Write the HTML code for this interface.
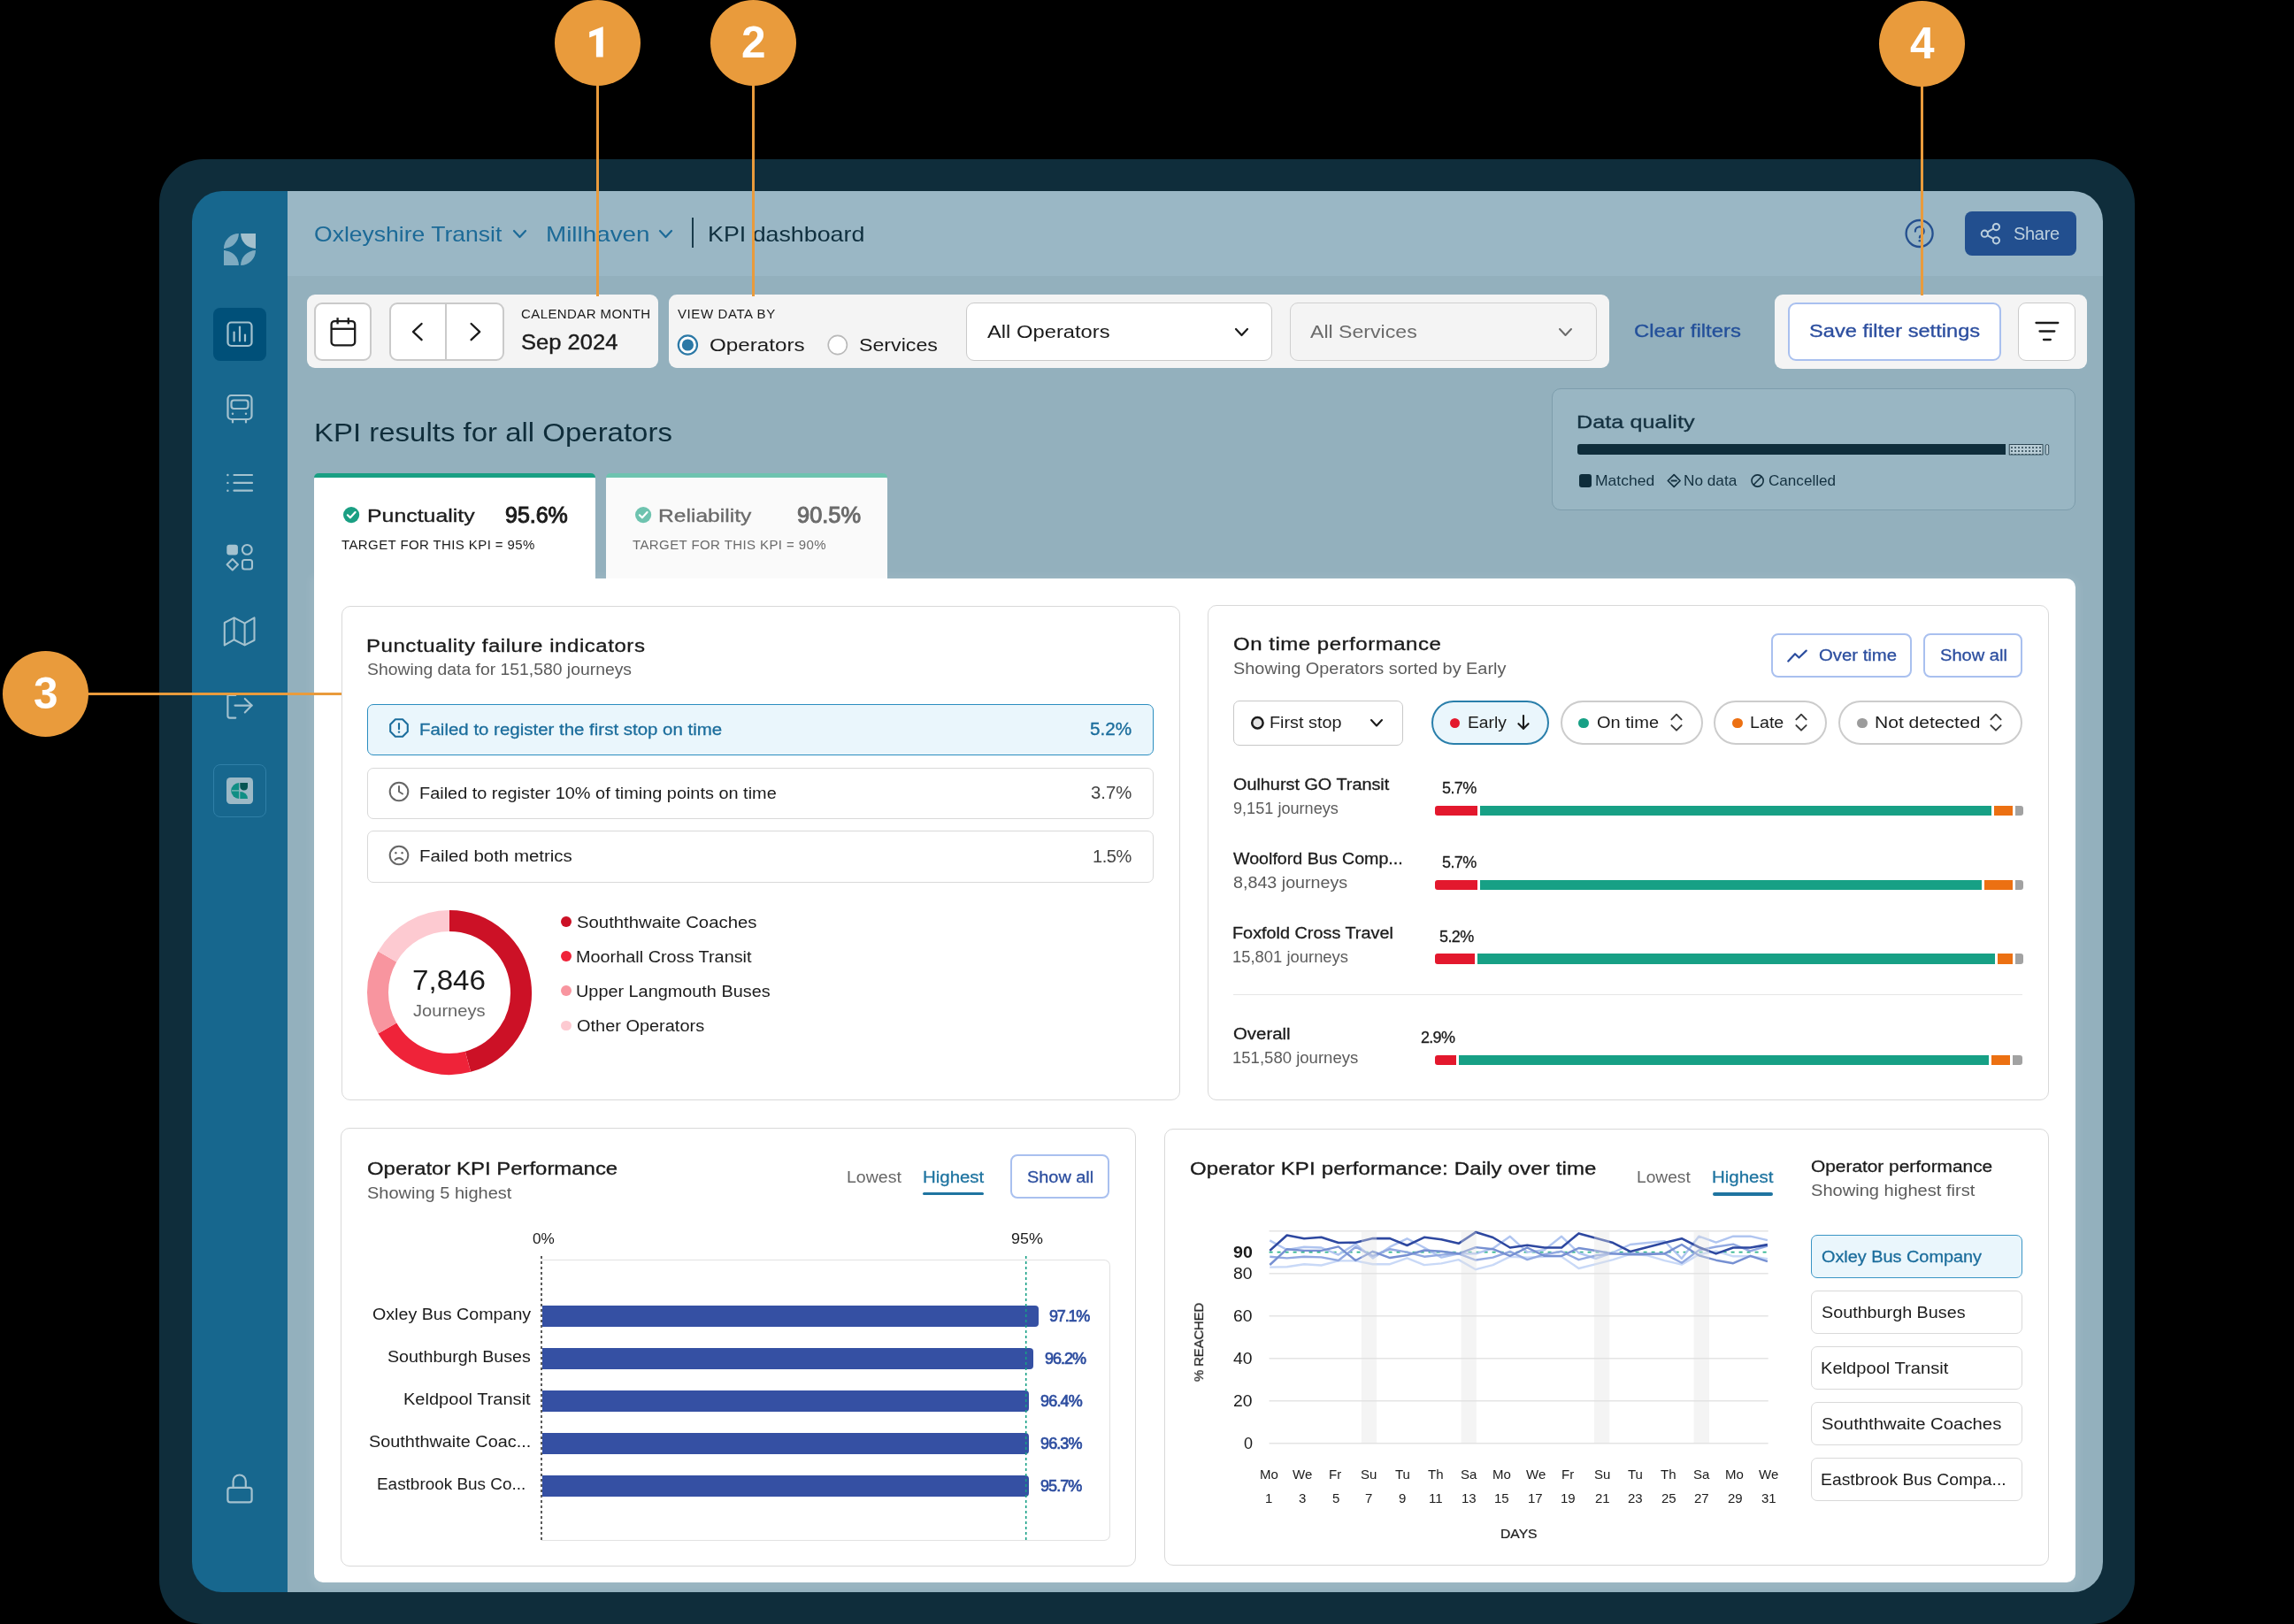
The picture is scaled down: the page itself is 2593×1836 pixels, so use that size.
<!DOCTYPE html>
<html><head><meta charset="utf-8"><title>KPI dashboard</title>
<style>
html,body{margin:0;padding:0;background:#000;width:2593px;height:1836px;overflow:hidden;}
body{position:relative;font-family:"Liberation Sans", sans-serif;}
.t{position:absolute;white-space:nowrap;will-change:transform;}
div,svg{position:absolute;}
</style></head><body>
<div style="position:absolute;left:180.00px;top:180.00px;width:2233.00px;height:1656.00px;box-sizing:border-box;background:#0f2d3b;border-radius:50px;"></div>
<div style="position:absolute;left:217.00px;top:216.00px;width:108.00px;height:1584.00px;box-sizing:border-box;background:#17678e;border-radius:34px 0 0 34px;"></div>
<div style="position:absolute;left:325.00px;top:216.00px;width:2052.00px;height:96.00px;box-sizing:border-box;background:#9ab7c5;border-radius:0 34px 0 0;"></div>
<div style="position:absolute;left:325.00px;top:312.00px;width:2052.00px;height:1488.00px;box-sizing:border-box;background:#93b0bd;border-radius:0 0 34px 0;"></div>
<svg style="position:absolute;left:253.00px;top:264.00px;overflow:visible;" width="36.00" height="36.00" viewBox="253.00 264.00 36.00 36.00">
<path fill="#7eabc1" d="M253 280.9 A16.9 16.9 0 0 1 269.9 264 A16.9 16.9 0 0 1 253 280.9Z"/>
<path fill="#a3c0cd" d="M272.1 264 L289 264 L289 280.9 A16.9 16.9 0 0 1 272.1 264Z"/>
<path fill="#7eabc1" d="M253 283.1 A16.9 16.9 0 0 1 269.9 300 L253 300Z"/>
<path fill="#7eabc1" d="M272.1 300 A16.9 16.9 0 0 1 289 283.1 A16.9 16.9 0 0 1 272.1 300Z"/>
</svg>
<div style="position:absolute;left:241.00px;top:348.00px;width:60.00px;height:60.00px;box-sizing:border-box;background:#005079;border-radius:8px;"></div>
<svg style="position:absolute;left:250.00px;top:357.00px;overflow:visible;" width="42.00" height="42.00" viewBox="250.00 357.00 42.00 42.00"><g fill="none" stroke="#a4c2cf" stroke-width="2.2" stroke-linecap="round">
<rect x="257.5" y="364.5" width="27" height="26.5" rx="4"/>
<line x1="264.6" y1="375.5" x2="264.6" y2="385.5"/><line x1="271" y1="369.5" x2="271" y2="385.5"/><line x1="277" y1="378.5" x2="277" y2="385.5"/></g></svg>
<svg style="position:absolute;left:250.00px;top:440.00px;overflow:visible;" width="42.00" height="42.00" viewBox="250.00 440.00 42.00 42.00"><g fill="none" stroke="#a4c2cf" stroke-width="2.2" stroke-linecap="round">
<rect x="257.5" y="447" width="27" height="27" rx="4"/>
<rect x="261.5" y="452.5" width="19" height="9.5" rx="3"/>
<line x1="263" y1="474" x2="263" y2="477.5"/><line x1="278" y1="474" x2="278" y2="477.5"/></g>
<circle cx="263" cy="467.7" r="1.2" fill="#a4c2cf"/><circle cx="278" cy="467.7" r="1.2" fill="#a4c2cf"/></svg>
<svg style="position:absolute;left:250.00px;top:530.00px;overflow:visible;" width="42.00" height="30.00" viewBox="250.00 530.00 42.00 30.00"><g fill="none" stroke="#a4c2cf" stroke-width="2.2" stroke-linecap="round">
<line x1="264.5" y1="537" x2="285" y2="537"/><line x1="264.5" y1="545.9" x2="285" y2="545.9"/><line x1="264.5" y1="554.7" x2="285" y2="554.7"/></g>
<circle cx="257.4" cy="537" r="1.2" fill="#a4c2cf"/><circle cx="257.4" cy="545.9" r="1.2" fill="#a4c2cf"/><circle cx="257.4" cy="554.7" r="1.2" fill="#a4c2cf"/></svg>
<svg style="position:absolute;left:250.00px;top:610.00px;overflow:visible;" width="42.00" height="40.00" viewBox="250.00 610.00 42.00 40.00"><rect x="256.3" y="615.7" width="12.6" height="11.8" rx="3" fill="#a4c2cf"/>
<g fill="none" stroke="#a4c2cf" stroke-width="2.1"><circle cx="279.3" cy="621.4" r="5.4"/>
<path d="M262.8 632 L269 638.2 L262.8 644.4 L256.6 638.2Z" stroke-linejoin="round"/>
<rect x="274" y="633" width="11" height="10.5" rx="2.5"/></g></svg>
<svg style="position:absolute;left:250.00px;top:694.00px;overflow:visible;" width="42.00" height="40.00" viewBox="250.00 694.00 42.00 40.00"><g fill="none" stroke="#a4c2cf" stroke-width="2.1" stroke-linejoin="round">
<path d="M253.8 704 L264.6 698.4 L276.6 704.6 L287.5 698.4 L287.5 723.8 L276.6 729.4 L264.6 723.2 L253.8 729.4Z"/>
<line x1="264.6" y1="698.4" x2="264.6" y2="723.2"/><line x1="276.6" y1="704.6" x2="276.6" y2="729.4"/></g></svg>
<svg style="position:absolute;left:250.00px;top:780.00px;overflow:visible;" width="42.00" height="40.00" viewBox="250.00 780.00 42.00 40.00"><g fill="none" stroke="#a4c2cf" stroke-width="2.1" stroke-linecap="round" stroke-linejoin="round">
<path d="M266.3 786 L257.4 786 L257.4 809.2 Q257.4 811.6 259.8 811.6 L266.3 811.6"/>
<line x1="265.5" y1="797.6" x2="284.6" y2="797.6"/><path d="M276.8 789.9 L284.6 797.6 L276.8 805.4"/></g></svg>
<div style="position:absolute;left:241.00px;top:864.00px;width:60.00px;height:60.00px;box-sizing:border-box;border:1.5px solid #2f7fa7;border-radius:8px;"></div>
<svg style="position:absolute;left:255.00px;top:878.00px;overflow:visible;" width="32.00" height="32.00" viewBox="255.00 878.00 32.00 32.00"><rect x="256" y="879" width="30" height="30" rx="4.5" fill="#9cb9c6"/>
<path d="M270.2 885 A9 9 0 0 0 270.2 903Z" fill="#0f8e84"/>
<rect x="262" y="893.1" width="8.2" height="1.5" fill="#6fb3b3"/>
<path d="M271.3 885 L280 885 L280 889.5 A4.3 4.3 0 0 1 275.6 893.6 A4.3 4.3 0 0 1 271.3 889.3Z" fill="#045553"/>
<path d="M271.3 895 A8.7 8 0 0 1 280 903 L271.3 903Z" fill="#0f8e84"/></svg>
<svg style="position:absolute;left:250.00px;top:1660.00px;overflow:visible;" width="42.00" height="44.00" viewBox="250.00 1660.00 42.00 44.00"><g fill="none" stroke="#a4c2cf" stroke-width="2.2">
<rect x="257.4" y="1681.8" width="27.2" height="16.6" rx="3"/>
<path d="M263.6 1681.8 L263.6 1674.6 A7.1 7.1 0 0 1 277.8 1674.6 L277.8 1681.8"/></g></svg>
<div class="t" style="left:354.59px;top:253.08px;font-size:24px;line-height:24px;color:#1c6a97;transform:scaleX(1.1052);transform-origin:0 0;">Oxleyshire Transit</div>
<svg style="position:absolute;left:578.50px;top:258.80px;overflow:visible;" width="17.00" height="11.00" viewBox="578.50 258.80 17.00 11.00"><path d="M580.5 260.8 L587 267.8 L593.5 260.8" fill="none" stroke="#1c6a97" stroke-width="2.2" stroke-linecap="round" stroke-linejoin="round"/></svg>
<div class="t" style="left:616.54px;top:253.08px;font-size:24px;line-height:24px;color:#1c6a97;transform:scaleX(1.1592);transform-origin:0 0;">Millhaven</div>
<svg style="position:absolute;left:743.50px;top:258.80px;overflow:visible;" width="17.00" height="11.00" viewBox="743.50 258.80 17.00 11.00"><path d="M745.5 260.8 L752 267.8 L758.5 260.8" fill="none" stroke="#1c6a97" stroke-width="2.2" stroke-linecap="round" stroke-linejoin="round"/></svg>
<div style="position:absolute;left:781.70px;top:246.00px;width:2.00px;height:34.00px;box-sizing:border-box;background:#1a3b4b;"></div>
<div class="t" style="left:799.68px;top:253.08px;font-size:24px;line-height:24px;color:#0f2f3e;transform:scaleX(1.1168);transform-origin:0 0;">KPI dashboard</div>
<svg style="position:absolute;left:2150.00px;top:244.00px;overflow:visible;" width="40.00" height="40.00" viewBox="2150.00 244.00 40.00 40.00"><circle cx="2169.6" cy="264" r="15" fill="none" stroke="#25508f" stroke-width="2.3"/>
<path d="M2164.9 261.6 A4.9 4.9 0 1 1 2171.6 265.9 Q2169.8 266.9 2169.8 268.6" fill="none" stroke="#25508f" stroke-width="2.2" stroke-linecap="round"/>
<circle cx="2169.8" cy="272.2" r="1.3" fill="#25508f"/></svg>
<div style="position:absolute;left:2221.00px;top:238.50px;width:126.00px;height:50.50px;box-sizing:border-box;background:#224f8f;border-radius:8px;"></div>
<svg style="position:absolute;left:2236.00px;top:250.00px;overflow:visible;" width="30.00" height="30.00" viewBox="2236.00 250.00 30.00 30.00"><g fill="none" stroke="#bdd0de" stroke-width="2"><circle cx="2243.3" cy="264.2" r="3.6"/><circle cx="2256.4" cy="256.6" r="3.6"/><circle cx="2256.4" cy="271.8" r="3.6"/>
<line x1="2246.5" y1="262.3" x2="2253.2" y2="258.5"/><line x1="2246.5" y1="266.1" x2="2253.2" y2="269.9"/></g></svg>
<div class="t" style="left:2275.50px;top:253.67px;font-size:20px;line-height:20px;color:#bdd0de;letter-spacing:-0.312px;">Share</div>
<div style="position:absolute;left:347.00px;top:333.00px;width:397.00px;height:83.00px;box-sizing:border-box;background:#f4f4f4;border-radius:9px;"></div>
<div style="position:absolute;left:355.00px;top:341.90px;width:65.00px;height:65.70px;box-sizing:border-box;background:#fff;border:2px solid #cacaca;border-radius:9px;"></div>
<svg style="position:absolute;left:370.00px;top:356.00px;overflow:visible;" width="36.00" height="38.00" viewBox="370.00 356.00 36.00 38.00"><g fill="none" stroke="#1b1b1b" stroke-width="2.3" stroke-linejoin="round">
<rect x="374.6" y="363.1" width="26.6" height="27.2" rx="3.6"/><line x1="374.6" y1="371.8" x2="401.2" y2="371.8"/>
<line x1="381.6" y1="359.2" x2="381.6" y2="366.4"/><line x1="393.8" y1="359.2" x2="393.8" y2="366.4"/></g></svg>
<div style="position:absolute;left:439.50px;top:341.90px;width:130.50px;height:65.70px;box-sizing:border-box;background:#fff;border:2px solid #cacaca;border-radius:9px;"></div>
<div style="position:absolute;left:503.20px;top:342.50px;width:2.00px;height:64.50px;box-sizing:border-box;background:#cacaca;"></div>
<svg style="position:absolute;left:460.00px;top:360.00px;overflow:visible;" width="30.00" height="30.00" viewBox="460.00 360.00 30.00 30.00"><path d="M476.6 366 L467 375.1 L476.6 384.2" fill="none" stroke="#1b1b1b" stroke-width="2.3" stroke-linecap="round" stroke-linejoin="round"/></svg>
<svg style="position:absolute;left:525.00px;top:360.00px;overflow:visible;" width="30.00" height="30.00" viewBox="525.00 360.00 30.00 30.00"><path d="M532.6 366 L542.2 375.1 L532.6 384.2" fill="none" stroke="#1b1b1b" stroke-width="2.3" stroke-linecap="round" stroke-linejoin="round"/></svg>
<div class="t" style="left:589.10px;top:347.20px;font-size:15px;line-height:15px;color:#1b1b1b;letter-spacing:0.407px;">CALENDAR MONTH</div>
<div class="t" style="left:588.94px;top:375.28px;font-size:24px;line-height:24px;color:#1b1b1b;-webkit-text-stroke:0.38px #1b1b1b;transform:scaleX(1.0649);transform-origin:0 0;">Sep 2024</div>
<div style="position:absolute;left:756.00px;top:333.00px;width:1063.00px;height:83.00px;box-sizing:border-box;background:#f4f4f4;border-radius:9px;"></div>
<div class="t" style="left:766.00px;top:347.30px;font-size:15px;line-height:15px;color:#1b1b1b;letter-spacing:0.595px;">VIEW DATA BY</div>
<svg style="position:absolute;left:760.00px;top:372.00px;overflow:visible;" width="36.00" height="36.00" viewBox="760.00 372.00 36.00 36.00"><circle cx="777.4" cy="390" r="10.6" fill="#fff" stroke="#2b78a6" stroke-width="2.2"/><circle cx="777.4" cy="390" r="6.6" fill="#2b78a6"/></svg>
<div class="t" style="left:802.30px;top:379.55px;font-size:20.5px;line-height:20.5px;color:#1b1b1b;transform:scaleX(1.1804);transform-origin:0 0;">Operators</div>
<svg style="position:absolute;left:930.00px;top:372.00px;overflow:visible;" width="36.00" height="36.00" viewBox="930.00 372.00 36.00 36.00"><circle cx="946.8" cy="390" r="10.6" fill="#fff" stroke="#b9b9b9" stroke-width="1.6"/></svg>
<div class="t" style="left:971.40px;top:379.55px;font-size:20.5px;line-height:20.5px;color:#1b1b1b;transform:scaleX(1.1307);transform-origin:0 0;">Services</div>
<div style="position:absolute;left:1092.00px;top:341.90px;width:346.00px;height:65.70px;box-sizing:border-box;background:#fff;border:1.5px solid #cacaca;border-radius:9px;"></div>
<div class="t" style="left:1116.20px;top:365.15px;font-size:20.5px;line-height:20.5px;color:#1b1b1b;transform:scaleX(1.1585);transform-origin:0 0;">All Operators</div>
<svg style="position:absolute;left:1394.50px;top:369.50px;overflow:visible;" width="17.00" height="11.00" viewBox="1394.50 369.50 17.00 11.00"><path d="M1396.5 371.5 L1403 378.5 L1409.5 371.5" fill="none" stroke="#1b1b1b" stroke-width="2.2" stroke-linecap="round" stroke-linejoin="round"/></svg>
<div style="position:absolute;left:1458.00px;top:341.90px;width:347.00px;height:65.70px;box-sizing:border-box;background:#f4f4f4;border:1.5px solid #cfcfcf;border-radius:9px;"></div>
<div class="t" style="left:1481.40px;top:365.15px;font-size:20.5px;line-height:20.5px;color:#6b6b6b;transform:scaleX(1.1270);transform-origin:0 0;">All Services</div>
<svg style="position:absolute;left:1760.50px;top:369.50px;overflow:visible;" width="17.00" height="11.00" viewBox="1760.50 369.50 17.00 11.00"><path d="M1762.5 371.5 L1769 378.5 L1775.5 371.5" fill="none" stroke="#6b6b6b" stroke-width="2.0" stroke-linecap="round" stroke-linejoin="round"/></svg>
<div class="t" style="left:1846.83px;top:363.65px;font-size:20.5px;line-height:20.5px;color:#24509a;-webkit-text-stroke:0.33px #24509a;transform:scaleX(1.1659);transform-origin:0 0;">Clear filters</div>
<div style="position:absolute;left:2006.00px;top:333.00px;width:353.00px;height:83.50px;box-sizing:border-box;background:#f4f4f4;border-radius:9px;"></div>
<div style="position:absolute;left:2020.50px;top:341.90px;width:241.50px;height:65.70px;box-sizing:border-box;background:#fff;border:2px solid #a9c0ef;border-radius:9px;"></div>
<div class="t" style="left:2044.60px;top:363.65px;font-size:20.5px;line-height:20.5px;color:#2c4e9f;-webkit-text-stroke:0.33px #2c4e9f;transform:scaleX(1.1528);transform-origin:0 0;">Save filter settings</div>
<div style="position:absolute;left:2281.30px;top:341.90px;width:64.70px;height:65.70px;box-sizing:border-box;background:#fff;border:1.5px solid #cacaca;border-radius:9px;"></div>
<svg style="position:absolute;left:2295.00px;top:358.00px;overflow:visible;" width="36.00" height="32.00" viewBox="2295.00 358.00 36.00 32.00"><g stroke="#1b1b1b" stroke-width="2.3" stroke-linecap="round">
<line x1="2301.5" y1="365" x2="2326.3" y2="365"/><line x1="2305.5" y1="374.5" x2="2322.3" y2="374.5"/><line x1="2310" y1="384" x2="2317.8" y2="384"/></g></svg>
<div class="t" style="left:354.90px;top:474.21px;font-size:30px;line-height:30px;color:#0f2d3a;transform:scaleX(1.0989);transform-origin:0 0;">KPI results for all Operators</div>
<div style="position:absolute;left:355.00px;top:534.60px;width:317.70px;height:125.40px;box-sizing:border-box;background:#fff;border-radius:7px 7px 0 0;"></div>
<div style="position:absolute;left:355.00px;top:534.60px;width:317.70px;height:5.20px;box-sizing:border-box;background:#1a9f83;border-radius:7px 7px 0 0;"></div>
<div style="position:absolute;left:685.00px;top:534.60px;width:318.00px;height:119.00px;box-sizing:border-box;background:#fafafa;border-radius:7px 7px 0 0;"></div>
<div style="position:absolute;left:685.00px;top:534.60px;width:318.00px;height:5.20px;box-sizing:border-box;background:#6ec3af;border-radius:7px 7px 0 0;"></div>
<svg style="position:absolute;left:386.70px;top:572.00px;overflow:visible;" width="20.20" height="20.20" viewBox="386.70 572.00 20.20 20.20"><circle cx="396.8" cy="582.1" r="9.1" fill="#1a9f83"/><path d="M392.6 582.3000000000001 L395.6 585.3000000000001 L401.3 579.1" fill="none" stroke="#fff" stroke-width="2.2" stroke-linecap="round" stroke-linejoin="round"/></svg>
<div class="t" style="left:414.62px;top:571.72px;font-size:21px;line-height:21px;color:#1b1b1b;-webkit-text-stroke:0.34px #1b1b1b;transform:scaleX(1.1837);transform-origin:0 0;">Punctuality</div>
<div class="t" style="left:571.20px;top:569.94px;font-size:25px;line-height:25px;color:#1b1b1b;letter-spacing:-0.014px;-webkit-text-stroke:1.00px #1b1b1b;">95.6%</div>
<div class="t" style="left:385.50px;top:608.30px;font-size:15px;line-height:15px;color:#1b1b1b;letter-spacing:0.395px;">TARGET FOR THIS KPI = 95%</div>
<svg style="position:absolute;left:716.60px;top:572.00px;overflow:visible;" width="20.20" height="20.20" viewBox="716.60 572.00 20.20 20.20"><circle cx="726.7" cy="582.1" r="9.1" fill="#6ec3af"/><path d="M722.5 582.3000000000001 L725.5 585.3000000000001 L731.2 579.1" fill="none" stroke="#fff" stroke-width="2.2" stroke-linecap="round" stroke-linejoin="round"/></svg>
<div class="t" style="left:744.43px;top:571.72px;font-size:21px;line-height:21px;color:#6b6b6b;-webkit-text-stroke:0.34px #6b6b6b;transform:scaleX(1.1716);transform-origin:0 0;">Reliability</div>
<div class="t" style="left:900.58px;top:569.94px;font-size:25px;line-height:25px;color:#6b6b6b;-webkit-text-stroke:1.00px #6b6b6b;transform:scaleX(1.0164);transform-origin:0 0;">90.5%</div>
<div class="t" style="left:715.40px;top:608.30px;font-size:15px;line-height:15px;color:#6b6b6b;letter-spacing:0.408px;">TARGET FOR THIS KPI = 90%</div>
<div style="position:absolute;left:1753.50px;top:438.60px;width:592.50px;height:138.70px;box-sizing:border-box;background:#99b6c3;border:1.5px solid #7d9dac;border-radius:10px;"></div>
<div class="t" style="left:1781.80px;top:466.42px;font-size:21px;line-height:21px;color:#143140;letter-spacing:0.040px;-webkit-text-stroke:0.34px #143140;transform:scaleX(1.2000);transform-origin:0 0;">Data quality</div>
<div style="position:absolute;left:1783.00px;top:502.40px;width:484.00px;height:11.90px;box-sizing:border-box;background:#0f2d3b;border-radius:3px 0 0 3px;"></div>
<svg style="position:absolute;left:2270.00px;top:501.00px;overflow:visible;" width="50.00" height="15.00" viewBox="2270.00 501.00 50.00 15.00"><defs><pattern id="dots" x="0" y="0" width="4" height="4" patternUnits="userSpaceOnUse"><rect width="4" height="4" fill="#b9cdd6"/><circle cx="2" cy="2" r="0.9" fill="#16303c"/></pattern></defs>
<rect x="2271.2" y="502.6" width="37.8" height="11.4" fill="url(#dots)" stroke="#16303c" stroke-width="0.8"/>
<rect x="2312.2" y="502.6" width="3.5" height="11.4" rx="1.5" fill="#b9cdd6" stroke="#16303c" stroke-width="0.8"/></svg>
<div style="position:absolute;left:1784.60px;top:536.30px;width:14.40px;height:14.40px;box-sizing:border-box;background:#0f2d3b;border-radius:3px;"></div>
<div class="t" style="left:1802.97px;top:535.11px;font-size:17px;line-height:17px;color:#143140;transform:scaleX(1.0306);transform-origin:0 0;">Matched</div>
<svg style="position:absolute;left:1880.00px;top:532.00px;overflow:visible;" width="24.00" height="24.00" viewBox="1880.00 532.00 24.00 24.00"><path d="M1892.2 536.6 L1899.1 543.5 L1892.2 550.4 L1885.3 543.5Z" fill="none" stroke="#143140" stroke-width="1.7" stroke-linejoin="round"/><line x1="1889.6" y1="543.5" x2="1894.8" y2="543.5" stroke="#143140" stroke-width="2.1" stroke-linecap="round"/></svg>
<div class="t" style="left:1902.99px;top:535.11px;font-size:17px;line-height:17px;color:#143140;transform:scaleX(1.0121);transform-origin:0 0;">No data</div>
<svg style="position:absolute;left:1975.00px;top:532.00px;overflow:visible;" width="24.00" height="24.00" viewBox="1975.00 532.00 24.00 24.00"><circle cx="1986.6" cy="543.5" r="6.6" fill="none" stroke="#143140" stroke-width="1.6"/><line x1="1982" y1="548.2" x2="1991.2" y2="538.8" stroke="#143140" stroke-width="1.6"/></svg>
<div class="t" style="left:1999.00px;top:535.11px;font-size:17px;line-height:17px;color:#143140;transform:scaleX(1.0060);transform-origin:0 0;">Cancelled</div>
<div style="position:absolute;left:355.00px;top:653.60px;width:1991.00px;height:1135.90px;box-sizing:border-box;background:#fff;border-radius:0 10px 10px 10px;box-shadow:0 2px 8px 5px rgba(255,255,255,0.075);"></div>
<div style="position:absolute;left:385.50px;top:685.00px;width:948.00px;height:559.00px;box-sizing:border-box;border:1.8px solid #d9d9d9;border-radius:10px;background:#fff;"></div>
<div class="t" style="left:413.90px;top:719.57px;font-size:20px;line-height:20px;color:#1b1b1b;letter-spacing:0.462px;-webkit-text-stroke:0.32px #1b1b1b;transform:scaleX(1.2000);transform-origin:0 0;">Punctuality failure indicators</div>
<div class="t" style="left:415.00px;top:748.26px;font-size:18px;line-height:18px;color:#5b5b5b;transform:scaleX(1.0748);transform-origin:0 0;">Showing data for 151,580 journeys</div>
<div style="position:absolute;left:415.10px;top:795.60px;width:888.80px;height:58.60px;box-sizing:border-box;background:#eaf6fc;border:1.5px solid #2b8ec0;border-radius:7px;"></div>
<div style="position:absolute;left:415.10px;top:867.50px;width:888.80px;height:58.30px;box-sizing:border-box;border:1.5px solid #d9d9d9;border-radius:7px;"></div>
<div style="position:absolute;left:415.10px;top:939.30px;width:888.80px;height:58.40px;box-sizing:border-box;border:1.5px solid #d9d9d9;border-radius:7px;"></div>
<svg style="position:absolute;left:436.80px;top:809.20px;overflow:visible;" width="28.00" height="28.00" viewBox="436.80 809.20 28.00 28.00"><polygon points="460.59,827.26 454.86,832.99 446.74,832.99 441.01,827.26 441.01,819.14 446.74,813.41 454.86,813.41 460.59,819.14" fill="none" stroke="#1b6d9c" stroke-width="2.1" stroke-linejoin="round"/><line x1="450.8" y1="818.2" x2="450.8" y2="824.4000000000001" stroke="#1b6d9c" stroke-width="2.1" stroke-linecap="round"/><circle cx="450.8" cy="827.8000000000001" r="1.2" fill="#1b6d9c"/></svg>
<div class="t" style="left:474.36px;top:815.66px;font-size:18px;line-height:18px;color:#1b6d9c;-webkit-text-stroke:0.29px #1b6d9c;transform:scaleX(1.1362);transform-origin:0 0;">Failed to register the first stop on time</div>
<div class="t" style="left:1232.00px;top:813.97px;font-size:20px;line-height:20px;color:#1b6d9c;-webkit-text-stroke:0.32px #1b6d9c;transform:scaleX(1.0349);transform-origin:0 0;">5.2%</div>
<svg style="position:absolute;left:436.80px;top:881.30px;overflow:visible;" width="28.00" height="28.00" viewBox="436.80 881.30 28.00 28.00"><circle cx="450.8" cy="895.3" r="10.3" fill="none" stroke="#666" stroke-width="2"/><path d="M450.8 889.3 L450.8 895.3 L454.8 897.8" fill="none" stroke="#666" stroke-width="2" stroke-linecap="round" stroke-linejoin="round"/></svg>
<div class="t" style="left:474.39px;top:887.56px;font-size:18px;line-height:18px;color:#1b1b1b;transform:scaleX(1.1055);transform-origin:0 0;">Failed to register 10% of timing points on time</div>
<div class="t" style="left:1232.90px;top:885.87px;font-size:20px;line-height:20px;color:#444;transform:scaleX(1.0152);transform-origin:0 0;">3.7%</div>
<svg style="position:absolute;left:436.80px;top:953.10px;overflow:visible;" width="28.00" height="28.00" viewBox="436.80 953.10 28.00 28.00"><circle cx="450.8" cy="967.1" r="10.3" fill="none" stroke="#666" stroke-width="2"/><circle cx="447.2" cy="964.3000000000001" r="1.2" fill="#666"/><circle cx="454.40000000000003" cy="964.3000000000001" r="1.2" fill="#666"/><path d="M446.3 972.1 Q450.8 968.1 455.3 972.1" fill="none" stroke="#666" stroke-width="1.8" stroke-linecap="round"/></svg>
<div class="t" style="left:474.36px;top:959.36px;font-size:18px;line-height:18px;color:#1b1b1b;transform:scaleX(1.1366);transform-origin:0 0;">Failed both metrics</div>
<div class="t" style="left:1235.00px;top:957.67px;font-size:20px;line-height:20px;color:#444;letter-spacing:-0.468px;">1.5%</div>
<svg style="position:absolute;left:413.00px;top:1026.80px;overflow:visible;" width="190.00" height="190.00" viewBox="413.00 1026.80 190.00 190.00"><path d="M508.00 1040.80 A81 81 0 0 1 528.96 1200.04" fill="none" stroke="#cc1126" stroke-width="24"/><path d="M528.96 1200.04 A81 81 0 0 1 437.85 1162.30" fill="none" stroke="#ef2339" stroke-width="24"/><path d="M437.85 1162.30 A81 81 0 0 1 437.85 1081.30" fill="none" stroke="#f8959f" stroke-width="24"/><path d="M437.85 1081.30 A81 81 0 0 1 508.00 1040.80" fill="none" stroke="#fdcad1" stroke-width="24"/></svg>
<div class="t" style="left:466.33px;top:1093.36px;font-size:31px;line-height:31px;color:#1b1b1b;transform:scaleX(1.0699);transform-origin:0 0;">7,846</div>
<div class="t" style="left:467.40px;top:1132.92px;font-size:19px;line-height:19px;color:#666;transform:scaleX(1.0575);transform-origin:0 0;">Journeys</div>
<div style="position:absolute;left:633.90px;top:1036.30px;width:11.80px;height:11.80px;box-sizing:border-box;background:#cc1126;border-radius:50%;"></div>
<div class="t" style="left:652.20px;top:1033.56px;font-size:18px;line-height:18px;color:#1b1b1b;transform:scaleX(1.1293);transform-origin:0 0;">Souththwaite Coaches</div>
<div style="position:absolute;left:633.90px;top:1075.37px;width:11.80px;height:11.80px;box-sizing:border-box;background:#ef2339;border-radius:50%;"></div>
<div class="t" style="left:651.10px;top:1072.63px;font-size:18px;line-height:18px;color:#1b1b1b;transform:scaleX(1.1027);transform-origin:0 0;">Moorhall Cross Transit</div>
<div style="position:absolute;left:633.90px;top:1114.44px;width:11.80px;height:11.80px;box-sizing:border-box;background:#f8959f;border-radius:50%;"></div>
<div class="t" style="left:651.10px;top:1111.70px;font-size:18px;line-height:18px;color:#1b1b1b;transform:scaleX(1.1028);transform-origin:0 0;">Upper Langmouth Buses</div>
<div style="position:absolute;left:633.90px;top:1153.51px;width:11.80px;height:11.80px;box-sizing:border-box;background:#fdcad1;border-radius:50%;"></div>
<div class="t" style="left:652.20px;top:1150.77px;font-size:18px;line-height:18px;color:#1b1b1b;transform:scaleX(1.1080);transform-origin:0 0;">Other Operators</div>
<div style="position:absolute;left:1365.00px;top:684.20px;width:951.20px;height:559.80px;box-sizing:border-box;border:1.8px solid #d9d9d9;border-radius:10px;background:#fff;"></div>
<div class="t" style="left:1394.40px;top:718.47px;font-size:20px;line-height:20px;color:#1b1b1b;letter-spacing:0.432px;-webkit-text-stroke:0.32px #1b1b1b;transform:scaleX(1.2000);transform-origin:0 0;">On time performance</div>
<div class="t" style="left:1394.40px;top:747.46px;font-size:18px;line-height:18px;color:#5b5b5b;transform:scaleX(1.1049);transform-origin:0 0;">Showing Operators sorted by Early</div>
<div style="position:absolute;left:2002.30px;top:716.10px;width:158.90px;height:49.60px;box-sizing:border-box;border:2px solid #a9c0ef;border-radius:8px;background:#fff;"></div>
<svg style="position:absolute;left:2015.00px;top:728.00px;overflow:visible;" width="32.00" height="26.00" viewBox="2015.00 728.00 32.00 26.00"><path d="M2021.3 747.5 L2029 739.2 L2033.5 743.5 L2041.7 735.6" fill="none" stroke="#2c4e9f" stroke-width="2.2" stroke-linecap="round" stroke-linejoin="round"/></svg>
<div class="t" style="left:2055.70px;top:732.36px;font-size:18px;line-height:18px;color:#2c4e9f;-webkit-text-stroke:0.29px #2c4e9f;transform:scaleX(1.1282);transform-origin:0 0;">Over time</div>
<div style="position:absolute;left:2174.40px;top:716.10px;width:112.00px;height:49.60px;box-sizing:border-box;border:2px solid #a9c0ef;border-radius:8px;background:#fff;"></div>
<div class="t" style="left:2192.80px;top:732.36px;font-size:18px;line-height:18px;color:#2c4e9f;-webkit-text-stroke:0.29px #2c4e9f;transform:scaleX(1.1158);transform-origin:0 0;">Show all</div>
<div style="position:absolute;left:1394.40px;top:792.30px;width:191.40px;height:50.30px;box-sizing:border-box;border:1.6px solid #c8c8c8;border-radius:7px;background:#fff;"></div>
<svg style="position:absolute;left:1410.00px;top:806.00px;overflow:visible;" width="24.00" height="24.00" viewBox="1410.00 806.00 24.00 24.00"><circle cx="1421.4" cy="817.3" r="6.2" fill="#e4e4e4" stroke="#1b1b1b" stroke-width="2.5"/></svg>
<div class="t" style="left:1435.20px;top:808.26px;font-size:18px;line-height:18px;color:#1b1b1b;transform:scaleX(1.1000);transform-origin:0 0;">First stop</div>
<svg style="position:absolute;left:1548.00px;top:812.35px;overflow:visible;" width="16.00" height="10.50" viewBox="1548.00 812.35 16.00 10.50"><path d="M1550.0 814.35 L1556 820.85 L1562.0 814.35" fill="none" stroke="#1b1b1b" stroke-width="2.1" stroke-linecap="round" stroke-linejoin="round"/></svg>
<div style="position:absolute;left:1617.80px;top:792.30px;width:132.90px;height:50.10px;box-sizing:border-box;background:#eaf6fc;border:2px solid #2a7fab;border-radius:25px;"></div>
<div style="position:absolute;left:1638.90px;top:811.80px;width:11.60px;height:11.60px;box-sizing:border-box;background:#e3182d;border-radius:50%;"></div>
<div class="t" style="left:1658.63px;top:808.26px;font-size:18px;line-height:18px;color:#1b1b1b;transform:scaleX(1.0672);transform-origin:0 0;">Early</div>
<svg style="position:absolute;left:1713.50px;top:805.00px;overflow:visible;" width="16.00" height="26.00" viewBox="1713.50 805.00 16.00 26.00"><g fill="none" stroke="#1b1b1b" stroke-width="2.1" stroke-linecap="round" stroke-linejoin="round"><line x1="1721.5" y1="809" x2="1721.5" y2="823.6"/><path d="M1715.9 818.2 L1721.5 823.8 L1727.1 818.2"/></g></svg>
<div style="position:absolute;left:1763.50px;top:792.30px;width:161.00px;height:50.10px;box-sizing:border-box;background:#fff;border:2px solid #cccccc;border-radius:25px;"></div>
<div style="position:absolute;left:1784.20px;top:811.80px;width:11.60px;height:11.60px;box-sizing:border-box;background:#17a085;border-radius:50%;"></div>
<div class="t" style="left:1805.40px;top:808.26px;font-size:18px;line-height:18px;color:#1b1b1b;transform:scaleX(1.1110);transform-origin:0 0;">On time</div>
<svg style="position:absolute;left:1887.00px;top:805.00px;overflow:visible;" width="16.00" height="26.00" viewBox="1887.00 805.00 16.00 26.00"><g fill="none" stroke="#3a3a3a" stroke-width="1.9" stroke-linecap="round" stroke-linejoin="round"><path d="M1889.4 813.4 L1895 807.7 L1900.6 813.4"/><path d="M1889.4 820.1 L1895 825.7 L1900.6 820.1"/></g></svg>
<div style="position:absolute;left:1937.40px;top:792.30px;width:128.10px;height:50.10px;box-sizing:border-box;background:#fff;border:2px solid #cccccc;border-radius:25px;"></div>
<div style="position:absolute;left:1958.00px;top:811.80px;width:11.60px;height:11.60px;box-sizing:border-box;background:#ec7012;border-radius:50%;"></div>
<div class="t" style="left:1978.11px;top:808.26px;font-size:18px;line-height:18px;color:#1b1b1b;transform:scaleX(1.0934);transform-origin:0 0;">Late</div>
<svg style="position:absolute;left:2028.00px;top:805.00px;overflow:visible;" width="16.00" height="26.00" viewBox="2028.00 805.00 16.00 26.00"><g fill="none" stroke="#3a3a3a" stroke-width="1.9" stroke-linecap="round" stroke-linejoin="round"><path d="M2030.4 813.4 L2036 807.7 L2041.6 813.4"/><path d="M2030.4 820.1 L2036 825.7 L2041.6 820.1"/></g></svg>
<div style="position:absolute;left:2078.30px;top:792.30px;width:208.10px;height:50.10px;box-sizing:border-box;background:#fff;border:2px solid #cccccc;border-radius:25px;"></div>
<div style="position:absolute;left:2099.40px;top:811.80px;width:11.60px;height:11.60px;box-sizing:border-box;background:#9b9b9b;border-radius:50%;"></div>
<div class="t" style="left:2119.03px;top:808.26px;font-size:18px;line-height:18px;color:#1b1b1b;transform:scaleX(1.1693);transform-origin:0 0;">Not detected</div>
<svg style="position:absolute;left:2248.00px;top:805.00px;overflow:visible;" width="16.00" height="26.00" viewBox="2248.00 805.00 16.00 26.00"><g fill="none" stroke="#3a3a3a" stroke-width="1.9" stroke-linecap="round" stroke-linejoin="round"><path d="M2250.4 813.4 L2256 807.7 L2261.6 813.4"/><path d="M2250.4 820.1 L2256 825.7 L2261.6 820.1"/></g></svg>
<div class="t" style="left:1394.30px;top:878.36px;font-size:18px;line-height:18px;color:#1b1b1b;-webkit-text-stroke:0.29px #1b1b1b;transform:scaleX(1.1012);transform-origin:0 0;">Oulhurst GO Transit</div>
<div class="t" style="left:1394.30px;top:905.36px;font-size:18px;line-height:18px;color:#5b5b5b;transform:scaleX(1.0069);transform-origin:0 0;">9,151 journeys</div>
<div class="t" style="left:1630.30px;top:882.36px;font-size:18px;line-height:18px;color:#1b1b1b;letter-spacing:-0.574px;-webkit-text-stroke:0.29px #1b1b1b;">5.7%</div>
<div style="position:absolute;left:1621.90px;top:910.60px;width:48.10px;height:11.80px;box-sizing:border-box;background:#e3182d;border-radius:3px 0 0 3px;"></div>
<div style="position:absolute;left:1673.00px;top:910.60px;width:577.90px;height:11.80px;box-sizing:border-box;background:#17a085;border-radius:0;"></div>
<div style="position:absolute;left:2253.80px;top:910.60px;width:21.00px;height:11.80px;box-sizing:border-box;background:#ec7012;border-radius:0;"></div>
<div style="position:absolute;left:2278.00px;top:910.60px;width:8.50px;height:11.80px;box-sizing:border-box;background:#a2a2a2;border-radius:0 3px 3px 0;"></div>
<div class="t" style="left:1394.30px;top:962.06px;font-size:18px;line-height:18px;color:#1b1b1b;-webkit-text-stroke:0.29px #1b1b1b;transform:scaleX(1.0908);transform-origin:0 0;">Woolford Bus Comp...</div>
<div class="t" style="left:1394.30px;top:989.06px;font-size:18px;line-height:18px;color:#5b5b5b;transform:scaleX(1.0942);transform-origin:0 0;">8,843 journeys</div>
<div class="t" style="left:1630.30px;top:966.46px;font-size:18px;line-height:18px;color:#1b1b1b;letter-spacing:-0.574px;-webkit-text-stroke:0.29px #1b1b1b;">5.7%</div>
<div style="position:absolute;left:1621.90px;top:994.70px;width:48.10px;height:11.80px;box-sizing:border-box;background:#e3182d;border-radius:3px 0 0 3px;"></div>
<div style="position:absolute;left:1673.00px;top:994.70px;width:567.00px;height:11.80px;box-sizing:border-box;background:#17a085;border-radius:0;"></div>
<div style="position:absolute;left:2243.30px;top:994.70px;width:31.50px;height:11.80px;box-sizing:border-box;background:#ec7012;border-radius:0;"></div>
<div style="position:absolute;left:2278.00px;top:994.70px;width:8.50px;height:11.80px;box-sizing:border-box;background:#a2a2a2;border-radius:0 3px 3px 0;"></div>
<div class="t" style="left:1393.20px;top:1045.96px;font-size:18px;line-height:18px;color:#1b1b1b;-webkit-text-stroke:0.29px #1b1b1b;transform:scaleX(1.1018);transform-origin:0 0;">Foxfold Cross Travel</div>
<div class="t" style="left:1393.28px;top:1072.96px;font-size:18px;line-height:18px;color:#5b5b5b;transform:scaleX(1.0229);transform-origin:0 0;">15,801 journeys</div>
<div class="t" style="left:1627.20px;top:1050.16px;font-size:18px;line-height:18px;color:#1b1b1b;letter-spacing:-0.574px;-webkit-text-stroke:0.29px #1b1b1b;">5.2%</div>
<div style="position:absolute;left:1621.90px;top:1078.40px;width:45.10px;height:11.80px;box-sizing:border-box;background:#e3182d;border-radius:3px 0 0 3px;"></div>
<div style="position:absolute;left:1670.00px;top:1078.40px;width:585.00px;height:11.80px;box-sizing:border-box;background:#17a085;border-radius:0;"></div>
<div style="position:absolute;left:2258.00px;top:1078.40px;width:16.80px;height:11.80px;box-sizing:border-box;background:#ec7012;border-radius:0;"></div>
<div style="position:absolute;left:2278.00px;top:1078.40px;width:8.50px;height:11.80px;box-sizing:border-box;background:#a2a2a2;border-radius:0 3px 3px 0;"></div>
<div style="position:absolute;left:1394.30px;top:1123.80px;width:892.20px;height:1.50px;box-sizing:border-box;background:#e6e6e6;"></div>
<div class="t" style="left:1394.30px;top:1159.56px;font-size:18px;line-height:18px;color:#1b1b1b;-webkit-text-stroke:0.29px #1b1b1b;transform:scaleX(1.1336);transform-origin:0 0;">Overall</div>
<div class="t" style="left:1393.27px;top:1186.56px;font-size:18px;line-height:18px;color:#5b5b5b;transform:scaleX(1.0299);transform-origin:0 0;">151,580 journeys</div>
<div class="t" style="left:1606.40px;top:1164.46px;font-size:18px;line-height:18px;color:#1b1b1b;letter-spacing:-0.707px;-webkit-text-stroke:0.29px #1b1b1b;">2.9%</div>
<div style="position:absolute;left:1621.90px;top:1192.70px;width:24.30px;height:11.80px;box-sizing:border-box;background:#e3182d;border-radius:3px 0 0 3px;"></div>
<div style="position:absolute;left:1649.00px;top:1192.70px;width:598.50px;height:11.80px;box-sizing:border-box;background:#17a085;border-radius:0;"></div>
<div style="position:absolute;left:2251.00px;top:1192.70px;width:20.80px;height:11.80px;box-sizing:border-box;background:#ec7012;border-radius:0;"></div>
<div style="position:absolute;left:2274.80px;top:1192.70px;width:11.70px;height:11.80px;box-sizing:border-box;background:#a2a2a2;border-radius:0 3px 3px 0;"></div>
<div style="position:absolute;left:385.40px;top:1275.40px;width:898.80px;height:495.60px;box-sizing:border-box;border:1.8px solid #d9d9d9;border-radius:10px;background:#fff;"></div>
<div class="t" style="left:414.60px;top:1311.17px;font-size:20px;line-height:20px;color:#1b1b1b;-webkit-text-stroke:0.32px #1b1b1b;transform:scaleX(1.1959);transform-origin:0 0;">Operator KPI Performance</div>
<div class="t" style="left:414.60px;top:1340.06px;font-size:18px;line-height:18px;color:#5b5b5b;transform:scaleX(1.1108);transform-origin:0 0;">Showing 5 highest</div>
<div class="t" style="left:956.71px;top:1321.76px;font-size:18px;line-height:18px;color:#666;transform:scaleX(1.0851);transform-origin:0 0;">Lowest</div>
<div class="t" style="left:1042.67px;top:1321.76px;font-size:18px;line-height:18px;color:#1f74a0;-webkit-text-stroke:0.29px #1f74a0;transform:scaleX(1.1344);transform-origin:0 0;">Highest</div>
<div style="position:absolute;left:1043.00px;top:1348.30px;width:69.00px;height:3.20px;box-sizing:border-box;background:#1f74a0;border-radius:2px;"></div>
<div style="position:absolute;left:1142.30px;top:1305.40px;width:111.50px;height:49.90px;box-sizing:border-box;border:2px solid #a9c0ef;border-radius:8px;background:#fff;"></div>
<div class="t" style="left:1161.40px;top:1321.76px;font-size:18px;line-height:18px;color:#2c4e9f;-webkit-text-stroke:0.29px #2c4e9f;transform:scaleX(1.1054);transform-origin:0 0;">Show all</div>
<div class="t" style="left:601.90px;top:1391.61px;font-size:17px;line-height:17px;color:#1b1b1b;transform:scaleX(1.0100);transform-origin:0 0;">0%</div>
<div class="t" style="left:1143.00px;top:1391.61px;font-size:17px;line-height:17px;color:#1b1b1b;transform:scaleX(1.0558);transform-origin:0 0;">95%</div>
<div style="position:absolute;left:612.00px;top:1424.20px;width:643.00px;height:317.60px;box-sizing:border-box;border:1.5px solid #e2e2e2;border-left:none;border-radius:0 7px 7px 0;"></div>
<svg style="position:absolute;left:608.00px;top:1418.00px;overflow:visible;" width="8.00" height="326.00" viewBox="608.00 1418.00 8.00 326.00"><line x1="612" y1="1420" x2="612" y2="1742" stroke="#333" stroke-width="1.6" stroke-dasharray="3 3"/></svg>
<div style="position:absolute;left:612.50px;top:1476.20px;width:561.00px;height:23.60px;box-sizing:border-box;background:#3550a3;border-radius:0 4px 4px 0;"></div>
<div class="t" style="left:420.70px;top:1476.96px;font-size:18px;line-height:18px;color:#1b1b1b;transform:scaleX(1.0922);transform-origin:0 0;">Oxley Bus Company</div>
<div class="t" style="left:1186.00px;top:1479.46px;font-size:18px;line-height:18px;color:#2e4ea0;letter-spacing:-1.183px;-webkit-text-stroke:0.72px #2e4ea0;">97.1%</div>
<div style="position:absolute;left:612.50px;top:1524.15px;width:555.30px;height:23.60px;box-sizing:border-box;background:#3550a3;border-radius:0 4px 4px 0;"></div>
<div class="t" style="left:438.00px;top:1524.91px;font-size:18px;line-height:18px;color:#1b1b1b;transform:scaleX(1.0931);transform-origin:0 0;">Southburgh Buses</div>
<div class="t" style="left:1180.80px;top:1527.41px;font-size:18px;line-height:18px;color:#2e4ea0;letter-spacing:-1.008px;-webkit-text-stroke:0.72px #2e4ea0;">96.2%</div>
<div style="position:absolute;left:612.50px;top:1572.10px;width:550.50px;height:23.60px;box-sizing:border-box;background:#3550a3;border-radius:0 4px 4px 0;"></div>
<div class="t" style="left:455.89px;top:1572.86px;font-size:18px;line-height:18px;color:#1b1b1b;transform:scaleX(1.1129);transform-origin:0 0;">Keldpool Transit</div>
<div class="t" style="left:1176.00px;top:1575.36px;font-size:18px;line-height:18px;color:#2e4ea0;letter-spacing:-0.808px;-webkit-text-stroke:0.72px #2e4ea0;">96.4%</div>
<div style="position:absolute;left:612.50px;top:1620.05px;width:550.50px;height:23.60px;box-sizing:border-box;background:#3550a3;border-radius:0 4px 4px 0;"></div>
<div class="t" style="left:417.40px;top:1620.81px;font-size:18px;line-height:18px;color:#1b1b1b;transform:scaleX(1.1030);transform-origin:0 0;">Souththwaite Coac...</div>
<div class="t" style="left:1176.00px;top:1623.31px;font-size:18px;line-height:18px;color:#2e4ea0;letter-spacing:-0.883px;-webkit-text-stroke:0.72px #2e4ea0;">96.3%</div>
<div style="position:absolute;left:612.50px;top:1668.00px;width:550.50px;height:23.60px;box-sizing:border-box;background:#3550a3;border-radius:0 4px 4px 0;"></div>
<div class="t" style="left:425.75px;top:1668.76px;font-size:18px;line-height:18px;color:#1b1b1b;transform:scaleX(1.0514);transform-origin:0 0;">Eastbrook Bus Co...</div>
<div class="t" style="left:1176.00px;top:1671.26px;font-size:18px;line-height:18px;color:#2e4ea0;letter-spacing:-0.933px;-webkit-text-stroke:0.72px #2e4ea0;">95.7%</div>
<svg style="position:absolute;left:1156.00px;top:1418.00px;overflow:visible;" width="8.00" height="326.00" viewBox="1156.00 1418.00 8.00 326.00"><line x1="1159.7" y1="1420" x2="1159.7" y2="1742" stroke="#17a085" stroke-width="1.6" stroke-dasharray="3 3"/></svg>
<div style="position:absolute;left:1315.70px;top:1275.70px;width:1000.60px;height:494.80px;box-sizing:border-box;border:1.8px solid #d9d9d9;border-radius:10px;background:#fff;"></div>
<div class="t" style="left:1344.90px;top:1311.27px;font-size:20px;line-height:20px;color:#1b1b1b;letter-spacing:0.124px;-webkit-text-stroke:0.32px #1b1b1b;transform:scaleX(1.2000);transform-origin:0 0;">Operator KPI performance: Daily over time</div>
<div class="t" style="left:1849.83px;top:1321.96px;font-size:18px;line-height:18px;color:#666;transform:scaleX(1.0655);transform-origin:0 0;">Lowest</div>
<div class="t" style="left:1934.66px;top:1321.96px;font-size:18px;line-height:18px;color:#1f74a0;-webkit-text-stroke:0.29px #1f74a0;transform:scaleX(1.1361);transform-origin:0 0;">Highest</div>
<div style="position:absolute;left:1935.50px;top:1348.40px;width:68.70px;height:3.20px;box-sizing:border-box;background:#1f74a0;border-radius:2px;"></div>
<div class="t" style="left:2046.70px;top:1310.26px;font-size:18px;line-height:18px;color:#1b1b1b;-webkit-text-stroke:0.29px #1b1b1b;transform:scaleX(1.1589);transform-origin:0 0;">Operator performance</div>
<div class="t" style="left:2046.70px;top:1337.26px;font-size:18px;line-height:18px;color:#5b5b5b;transform:scaleX(1.1157);transform-origin:0 0;">Showing highest first</div>
<div style="position:absolute;left:2047.30px;top:1395.50px;width:239.00px;height:49.70px;box-sizing:border-box;background:#eaf6fc;border:1.5px solid #3a95c5;border-radius:7px;"></div>
<div class="t" style="left:2059.20px;top:1411.56px;font-size:18px;line-height:18px;color:#1b6d9c;-webkit-text-stroke:0.29px #1b6d9c;transform:scaleX(1.1032);transform-origin:0 0;">Oxley Bus Company</div>
<div style="position:absolute;left:2047.30px;top:1458.55px;width:239.00px;height:49.70px;box-sizing:border-box;border:1.5px solid #d9d9d9;border-radius:7px;"></div>
<div class="t" style="left:2059.20px;top:1474.61px;font-size:18px;line-height:18px;color:#1b1b1b;transform:scaleX(1.0972);transform-origin:0 0;">Southburgh Buses</div>
<div style="position:absolute;left:2047.30px;top:1521.60px;width:239.00px;height:49.70px;box-sizing:border-box;border:1.5px solid #d9d9d9;border-radius:7px;"></div>
<div class="t" style="left:2058.08px;top:1537.66px;font-size:18px;line-height:18px;color:#1b1b1b;transform:scaleX(1.1176);transform-origin:0 0;">Keldpool Transit</div>
<div style="position:absolute;left:2047.30px;top:1584.65px;width:239.00px;height:49.70px;box-sizing:border-box;border:1.5px solid #d9d9d9;border-radius:7px;"></div>
<div class="t" style="left:2059.20px;top:1600.71px;font-size:18px;line-height:18px;color:#1b1b1b;transform:scaleX(1.1287);transform-origin:0 0;">Souththwaite Coaches</div>
<div style="position:absolute;left:2047.30px;top:1647.70px;width:239.00px;height:49.70px;box-sizing:border-box;border:1.5px solid #d9d9d9;border-radius:7px;"></div>
<div class="t" style="left:2058.13px;top:1663.76px;font-size:18px;line-height:18px;color:#1b1b1b;transform:scaleX(1.0746);transform-origin:0 0;">Eastbrook Bus Compa...</div>
<svg style="position:absolute;left:1420.00px;top:1380.00px;overflow:visible;" width="600.00" height="260.00" viewBox="1420.00 1380.00 600.00 260.00"><line x1="1434.6" y1="1391.70" x2="1998.7" y2="1391.70" stroke="#e4e4e4" stroke-width="1.6"/><line x1="1434.6" y1="1439.72" x2="1998.7" y2="1439.72" stroke="#e4e4e4" stroke-width="1.6"/><line x1="1434.6" y1="1487.74" x2="1998.7" y2="1487.74" stroke="#e4e4e4" stroke-width="1.6"/><line x1="1434.6" y1="1535.76" x2="1998.7" y2="1535.76" stroke="#e4e4e4" stroke-width="1.6"/><line x1="1434.6" y1="1583.78" x2="1998.7" y2="1583.78" stroke="#e4e4e4" stroke-width="1.6"/><line x1="1434.6" y1="1631.80" x2="1998.7" y2="1631.80" stroke="#e4e4e4" stroke-width="1.6"/><line x1="1434.6" y1="1415.71" x2="1998.7" y2="1415.71" stroke="#2db38f" stroke-width="1.8" stroke-dasharray="4 5"/><polyline points="1435.30,1432.60 1454.70,1432.20 1474.10,1429.20 1493.50,1430.50 1512.90,1425.40 1532.30,1425.40 1551.70,1429.20 1571.10,1429.20 1590.50,1422.40 1609.90,1430.10 1629.30,1428.40 1648.70,1424.10 1668.10,1435.20 1687.50,1430.10 1706.90,1420.70 1726.30,1421.60 1745.70,1420.70 1765.10,1420.70 1784.50,1434.00 1803.90,1429.10 1823.30,1424.20 1842.70,1417.90 1862.10,1419.30 1881.50,1425.20 1900.90,1429.60 1920.30,1418.30 1939.70,1414.40 1959.10,1420.30 1978.50,1420.30 1997.90,1423.20" fill="none" stroke="#c9d9f7" stroke-width="2.4" stroke-linejoin="round"/><polyline points="1435.30,1402.40 1454.70,1413.00 1474.10,1409.70 1493.50,1410.50 1512.90,1418.60 1532.30,1406.30 1551.70,1422.40 1571.10,1409.70 1590.50,1400.30 1609.90,1410.50 1629.30,1421.60 1648.70,1417.30 1668.10,1417.30 1687.50,1411.40 1706.90,1397.80 1726.30,1415.60 1745.70,1413.10 1765.10,1397.80 1784.50,1416.50 1803.90,1422.80 1823.30,1416.00 1842.70,1407.00 1862.10,1405.00 1881.50,1403.10 1900.90,1422.80 1920.30,1397.70 1939.70,1404.60 1959.10,1397.70 1978.50,1397.70 1997.90,1402.20" fill="none" stroke="#b0c5f0" stroke-width="2.4" stroke-linejoin="round"/><polyline points="1435.30,1420.70 1454.70,1422.40 1474.10,1420.70 1493.50,1421.40 1512.90,1425.00 1532.30,1409.70 1551.70,1419.90 1571.10,1412.20 1590.50,1415.60 1609.90,1420.70 1629.30,1418.60 1648.70,1417.30 1668.10,1424.50 1687.50,1421.60 1706.90,1414.80 1726.30,1424.10 1745.70,1418.20 1765.10,1414.80 1784.50,1424.20 1803.90,1419.30 1823.30,1417.40 1842.70,1417.40 1862.10,1417.40 1881.50,1417.40 1900.90,1427.70 1920.30,1413.40 1939.70,1409.50 1959.10,1406.60 1978.50,1414.40 1997.90,1408.50" fill="none" stroke="#93aae2" stroke-width="2.4" stroke-linejoin="round"/><polyline points="1435.30,1430.00 1454.70,1412.20 1474.10,1413.90 1493.50,1413.90 1512.90,1409.40 1532.30,1425.00 1551.70,1414.80 1571.10,1422.00 1590.50,1419.00 1609.90,1413.50 1629.30,1414.80 1648.70,1417.30 1668.10,1410.10 1687.50,1412.20 1706.90,1419.90 1726.30,1410.50 1745.70,1419.90 1765.10,1419.90 1784.50,1411.00 1803.90,1414.00 1823.30,1417.40 1842.70,1418.30 1862.10,1418.00 1881.50,1417.40 1900.90,1407.00 1920.30,1419.30 1939.70,1424.70 1959.10,1428.20 1978.50,1419.80 1997.90,1426.20" fill="none" stroke="#7690d2" stroke-width="2.4" stroke-linejoin="round"/><polyline points="1435.30,1413.90 1454.70,1396.50 1474.10,1400.30 1493.50,1398.80 1512.90,1405.00 1532.30,1404.70 1551.70,1400.10 1571.10,1400.10 1590.50,1408.00 1609.90,1398.80 1629.30,1401.20 1648.70,1405.80 1668.10,1393.10 1687.50,1399.00 1706.90,1410.50 1726.30,1407.80 1745.70,1410.50 1765.10,1410.50 1784.50,1394.40 1803.90,1399.70 1823.30,1405.10 1842.70,1414.90 1862.10,1410.00 1881.50,1405.10 1900.90,1400.20 1920.30,1410.00 1939.70,1417.40 1959.10,1410.50 1978.50,1410.50 1997.90,1407.10" fill="none" stroke="#2e48a0" stroke-width="2.6" stroke-linejoin="round"/><rect x="1538.80" y="1392.70" width="17.4" height="239.10" fill="rgba(225,225,225,0.38)"/><rect x="1651.50" y="1392.70" width="17.4" height="239.10" fill="rgba(225,225,225,0.38)"/><rect x="1801.90" y="1392.70" width="17.4" height="239.10" fill="rgba(225,225,225,0.38)"/><rect x="1914.60" y="1392.70" width="17.4" height="239.10" fill="rgba(225,225,225,0.38)"/></svg>
<div class="t" style="left:1394.30px;top:1430.78px;font-size:18px;line-height:18px;color:#1b1b1b;transform:scaleX(1.0744);transform-origin:0 0;">80</div>
<div class="t" style="left:1394.30px;top:1478.80px;font-size:18px;line-height:18px;color:#1b1b1b;transform:scaleX(1.0744);transform-origin:0 0;">60</div>
<div class="t" style="left:1394.30px;top:1526.82px;font-size:18px;line-height:18px;color:#1b1b1b;transform:scaleX(1.0744);transform-origin:0 0;">40</div>
<div class="t" style="left:1394.30px;top:1574.84px;font-size:18px;line-height:18px;color:#1b1b1b;transform:scaleX(1.0744);transform-origin:0 0;">20</div>
<div class="t" style="left:1405.80px;top:1622.86px;font-size:18px;line-height:18px;color:#1b1b1b;">0</div>
<div class="t" style="left:1394.00px;top:1406.77px;font-size:18px;line-height:18px;color:#1b1b1b;font-weight:bold;transform:scaleX(1.0894);transform-origin:0 0;">90</div>
<div class="t" style="left:1423.85px;top:1658.70px;font-size:15px;line-height:15px;color:#1b1b1b;">Mo</div>
<div class="t" style="left:1430.10px;top:1685.80px;font-size:15px;line-height:15px;color:#1b1b1b;">1</div>
<div class="t" style="left:1461.26px;top:1658.70px;font-size:15px;line-height:15px;color:#1b1b1b;">We</div>
<div class="t" style="left:1468.21px;top:1685.80px;font-size:15px;line-height:15px;color:#1b1b1b;">3</div>
<div class="t" style="left:1502.23px;top:1658.70px;font-size:15px;line-height:15px;color:#1b1b1b;">Fr</div>
<div class="t" style="left:1505.81px;top:1685.80px;font-size:15px;line-height:15px;color:#1b1b1b;">5</div>
<div class="t" style="left:1538.42px;top:1658.70px;font-size:15px;line-height:15px;color:#1b1b1b;">Su</div>
<div class="t" style="left:1543.42px;top:1685.80px;font-size:15px;line-height:15px;color:#1b1b1b;">7</div>
<div class="t" style="left:1576.72px;top:1658.70px;font-size:15px;line-height:15px;color:#1b1b1b;">Tu</div>
<div class="t" style="left:1581.03px;top:1685.80px;font-size:15px;line-height:15px;color:#1b1b1b;">9</div>
<div class="t" style="left:1614.05px;top:1658.70px;font-size:15px;line-height:15px;color:#1b1b1b;">Th</div>
<div class="t" style="left:1614.52px;top:1685.80px;font-size:15px;line-height:15px;color:#1b1b1b;">11</div>
<div class="t" style="left:1650.74px;top:1658.70px;font-size:15px;line-height:15px;color:#1b1b1b;">Sa</div>
<div class="t" style="left:1651.57px;top:1685.80px;font-size:15px;line-height:15px;color:#1b1b1b;">13</div>
<div class="t" style="left:1687.10px;top:1658.70px;font-size:15px;line-height:15px;color:#1b1b1b;">Mo</div>
<div class="t" style="left:1689.18px;top:1685.80px;font-size:15px;line-height:15px;color:#1b1b1b;">15</div>
<div class="t" style="left:1724.51px;top:1658.70px;font-size:15px;line-height:15px;color:#1b1b1b;">We</div>
<div class="t" style="left:1726.78px;top:1685.80px;font-size:15px;line-height:15px;color:#1b1b1b;">17</div>
<div class="t" style="left:1765.48px;top:1658.70px;font-size:15px;line-height:15px;color:#1b1b1b;">Fr</div>
<div class="t" style="left:1764.39px;top:1685.80px;font-size:15px;line-height:15px;color:#1b1b1b;">19</div>
<div class="t" style="left:1801.66px;top:1658.70px;font-size:15px;line-height:15px;color:#1b1b1b;">Su</div>
<div class="t" style="left:1802.50px;top:1685.80px;font-size:15px;line-height:15px;color:#1b1b1b;">21</div>
<div class="t" style="left:1839.97px;top:1658.70px;font-size:15px;line-height:15px;color:#1b1b1b;">Tu</div>
<div class="t" style="left:1840.10px;top:1685.80px;font-size:15px;line-height:15px;color:#1b1b1b;">23</div>
<div class="t" style="left:1877.30px;top:1658.70px;font-size:15px;line-height:15px;color:#1b1b1b;">Th</div>
<div class="t" style="left:1877.71px;top:1685.80px;font-size:15px;line-height:15px;color:#1b1b1b;">25</div>
<div class="t" style="left:1913.98px;top:1658.70px;font-size:15px;line-height:15px;color:#1b1b1b;">Sa</div>
<div class="t" style="left:1915.32px;top:1685.80px;font-size:15px;line-height:15px;color:#1b1b1b;">27</div>
<div class="t" style="left:1950.35px;top:1658.70px;font-size:15px;line-height:15px;color:#1b1b1b;">Mo</div>
<div class="t" style="left:1952.92px;top:1685.80px;font-size:15px;line-height:15px;color:#1b1b1b;">29</div>
<div class="t" style="left:1987.76px;top:1658.70px;font-size:15px;line-height:15px;color:#1b1b1b;">We</div>
<div class="t" style="left:1990.53px;top:1685.80px;font-size:15px;line-height:15px;color:#1b1b1b;">31</div>
<div class="t" style="left:1695.70px;top:1726.30px;font-size:15px;line-height:15px;color:#1b1b1b;-webkit-text-stroke:0.24px #1b1b1b;transform:scaleX(1.0457);transform-origin:0 0;">DAYS</div>
<div class="t" style="left:1310.10px;top:1510.30px;font-size:15px;line-height:15px;color:#1b1b1b;letter-spacing:-0.177px;-webkit-text-stroke:0.24px #1b1b1b;transform:rotate(-90deg);transform-origin:50% 50%;">% REACHED</div>
<div style="position:absolute;left:674.00px;top:90.00px;width:3.00px;height:245.00px;box-sizing:border-box;background:#e99b3c;"></div>
<div style="position:absolute;left:849.70px;top:90.00px;width:3.00px;height:245.00px;box-sizing:border-box;background:#e99b3c;"></div>
<div style="position:absolute;left:2171.20px;top:90.00px;width:3.00px;height:244.00px;box-sizing:border-box;background:#e99b3c;"></div>
<div style="position:absolute;left:95.00px;top:782.50px;width:291.00px;height:3.00px;box-sizing:border-box;background:#e99b3c;"></div>
<div style="position:absolute;left:627.10px;top:-0.20px;width:96.80px;height:96.80px;box-sizing:border-box;background:#e99b3c;border-radius:50%;"></div>
<svg style="position:absolute;left:655.50px;top:28.20px;overflow:visible;" width="40.00" height="40.00" viewBox="655.50 28.20 40.00 40.00"><polygon fill="#fff" points="665.7,36.300000000000004 680.5,30.400000000000002 681.2,30.400000000000002 681.2,64.80000000000001 673.4,64.80000000000001 673.4,39.800000000000004 665.7,42.6"/></svg>
<div style="position:absolute;left:802.80px;top:-0.20px;width:96.80px;height:96.80px;box-sizing:border-box;background:#e99b3c;border-radius:50%;"></div>
<div class="t" style="left:837.70px;top:23.10px;font-size:49.5px;line-height:49.5px;color:#ffffff;font-weight:bold;">2</div>
<div style="position:absolute;left:2124.20px;top:0.90px;width:96.80px;height:96.80px;box-sizing:border-box;background:#e99b3c;border-radius:50%;"></div>
<div class="t" style="left:2158.60px;top:24.20px;font-size:49.5px;line-height:49.5px;color:#ffffff;font-weight:bold;">4</div>
<div style="position:absolute;left:3.20px;top:736.00px;width:96.80px;height:96.80px;box-sizing:border-box;background:#e99b3c;border-radius:50%;"></div>
<div class="t" style="left:38.10px;top:759.30px;font-size:49.5px;line-height:49.5px;color:#ffffff;font-weight:bold;">3</div>
</body></html>
